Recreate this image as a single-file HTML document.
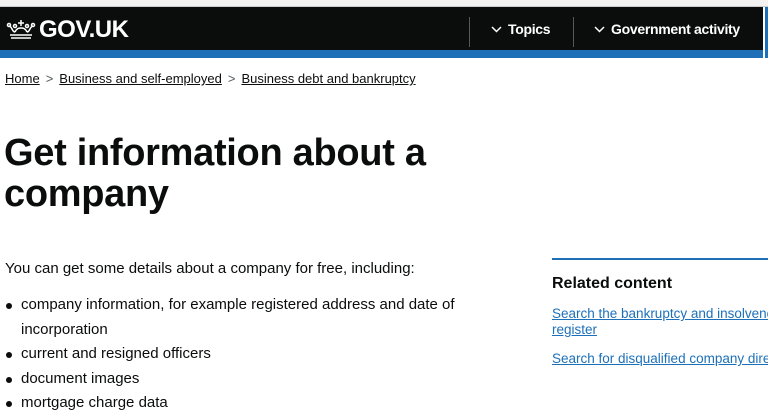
<!DOCTYPE html>
<html><head><style>
*{margin:0;padding:0;box-sizing:border-box}
body{width:768px;height:402px;overflow:hidden;background:#fff;font-family:"Liberation Sans",Arial,sans-serif;color:#0b0c0c;position:relative}
.top{position:absolute;left:0;top:0;width:768px;height:7px;background:#f3f2f1;border-bottom:1px solid #ccc}
.hdr{position:absolute;left:0;top:7px;width:763px;height:43px;background:#0b0c0c;color:#fff}
.blue{position:absolute;left:0;top:50px;width:763px;height:8px;background:#1d70b8}
.rb{position:absolute;left:765px;top:7px;width:3px;height:51px;background:#1d70b8}
.logo{position:absolute;left:6px;top:9px;font-weight:bold;font-size:24px;letter-spacing:-0.5px}
.logo svg{vertical-align:-3px;margin-right:3px}
.sep{position:absolute;top:10px;width:1px;height:30px;background:#505a5f}
.nav{position:absolute;top:14px;font-weight:bold;font-size:14px;letter-spacing:-0.3px}
.nav svg{vertical-align:1px;margin-right:6px}
.crumb{position:absolute;left:5px;top:71px;font-size:13px}
.crumb a{color:#0b0c0c;text-decoration:underline}
.crumb span{margin:0 6px;color:#505a5f}
h1{position:absolute;left:4px;top:133px;font-size:38px;line-height:41px;font-weight:bold;letter-spacing:-0.3px}
.p{position:absolute;left:5px;top:260px;font-size:15px}
ul{position:absolute;left:5px;top:293px;list-style:none;font-size:15px;line-height:24.5px;width:480px}
ul li{padding-left:16px;position:relative}
ul li:before{content:"";position:absolute;left:1px;top:10px;width:6px;height:6px;border-radius:50%;background:#0b0c0c}
.rel{position:absolute;left:552px;top:258px;width:216px;border-top:2px solid #1d70b8}
.rel h2{font-size:16px;font-weight:bold;margin-top:15px}
.rel a{display:block;color:#1d70b8;font-size:13.5px;line-height:16px;text-decoration:underline;white-space:nowrap;margin-top:13px}
</style></head><body>
<div class="top"></div>
<div class="hdr">
<div class="logo"><svg width="30" height="22" viewBox="0 0 30 22"><g fill="none" stroke="#fff" stroke-width="1.5"><path d="M3 8c3 0 3 6 6 6M27 8c-3 0-3 6-6 6M9 14c2-4 4-4 6-4s4 0 6 4M4 17h22M5 20h20M15 2v6M12 5h6"/><circle cx="3" cy="7" r="1.5"/><circle cx="27" cy="7" r="1.5"/><circle cx="9" cy="8" r="1.5"/><circle cx="21" cy="8" r="1.5"/></g></svg>GOV.UK</div>
<div class="sep" style="left:469px"></div>
<div class="nav" style="left:491px"><svg width="11" height="7" viewBox="0 0 11 7"><path d="M1 1l4.5 4.5L10 1" fill="none" stroke="#fff" stroke-width="1.5"/></svg>Topics</div>
<div class="sep" style="left:573px"></div>
<div class="nav" style="left:594px"><svg width="11" height="7" viewBox="0 0 11 7"><path d="M1 1l4.5 4.5L10 1" fill="none" stroke="#fff" stroke-width="1.5"/></svg>Government activity</div>
</div>
<div class="blue"></div><div class="rb"></div>
<div class="crumb"><a>Home</a><span>&gt;</span><a>Business and self-employed</a><span>&gt;</span><a>Business debt and bankruptcy</a></div>
<h1>Get information about a<br>company</h1>
<div class="p">You can get some details about a company for free, including:</div>
<ul><li>company information, for example registered address and date of incorporation</li><li>current and resigned officers</li><li>document images</li><li>mortgage charge data</li></ul>
<div class="rel"><h2>Related content</h2><a>Search the bankruptcy and insolvency<br>register</a><a>Search for disqualified company directors</a></div>
</body></html>
